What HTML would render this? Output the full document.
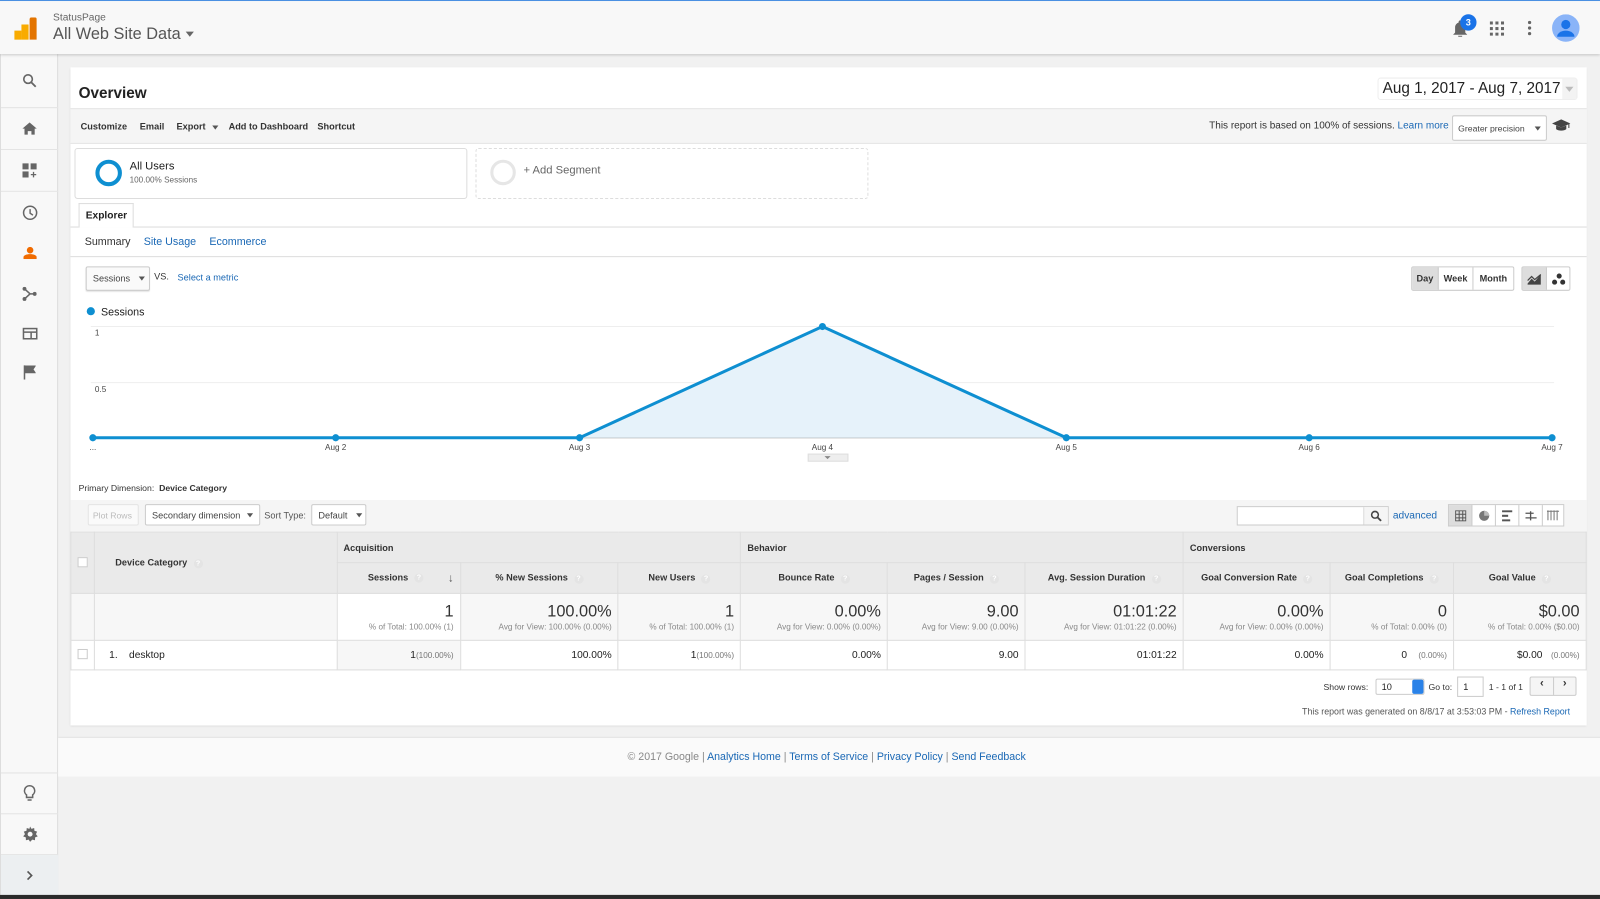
<!DOCTYPE html>
<html><head><meta charset="utf-8"><style>
*{box-sizing:border-box;margin:0;padding:0}
html,body{width:1600px;height:899px;overflow:hidden;background:#f1f1f1;font-family:"Liberation Sans",Arial,sans-serif;color:#222}
#w{position:absolute;left:0;top:0;width:1568px;height:881px;transform:scale(1.0204);transform-origin:0 0;background:#f1f1f1}
.a{position:absolute;white-space:nowrap}
.lnk{color:#1a68b5}
.hdr{left:0;top:0;width:1568px;height:53px;background:#f8f8f8;border-top:1px solid #4a90e2;box-shadow:0 1px 3px rgba(0,0,0,.25);z-index:3}
.side{left:0;top:53px;width:57px;height:824px;background:#f8f8f8;border-right:1px solid #ddd;border-left:1px solid #ddd}
.si{position:absolute;left:0;width:56px;display:flex;justify-content:center;align-items:center}
.card{left:69px;top:66px;width:1486px;height:645px;background:#fff;box-shadow:0 1px 2px rgba(0,0,0,.12)}
.tb{font-size:9px;font-weight:bold;color:#333}
table{border-collapse:collapse;position:absolute;left:69px;top:521px;width:1486px;font-size:9px}
td{border:1px solid #ddd;padding:0 6px;white-space:nowrap}
.gh td{background:#eaeaea;height:30px;font-weight:bold;color:#333}
.ch td{background:#eaeaea;height:30px;font-weight:bold;text-align:center;color:#333}
.tot td{background:#f7f7f7;height:46px;text-align:right;vertical-align:middle}
.tot b{display:block;font-weight:normal;font-size:16px;color:#333}
.tot i{font-style:normal;font-size:8px;color:#888}
.dr td{height:29px;text-align:right;font-size:10px;color:#222}
.q{display:inline-block;width:9px;height:9px;border-radius:50%;background:#e4e4e4;color:#fff;font-size:7px;line-height:9px;text-align:center;margin-left:6px;vertical-align:middle}
.btn{border:1px solid #ccc;border-radius:2px;background:#fafafa;font-size:9px;color:#444;display:flex;align-items:center;padding:0 6px;white-space:nowrap}
.car{display:inline-block;border-left:3px solid transparent;border-right:3px solid transparent;border-top:4px solid #555;margin-left:6px}
</style></head><body><div id="w">

<div class="a hdr">
 <svg class="a" style="left:14px;top:16px" width="22" height="22"><rect x="0" y="13" width="7" height="9" fill="#f9ab00"/><rect x="7" y="7" width="7" height="15" fill="#f9ab00"/><path d="M15 2 Q15 0 17 0 H20 Q22 0 22 2 V22 H15Z" fill="#e37400"/></svg>
 <div class="a" style="left:52px;top:11px;font-size:10px;color:#666">StatusPage</div>
 <div class="a" style="left:52px;top:24px;font-size:16px;color:#555">All Web Site Data <span style="display:inline-block;border-left:4px solid transparent;border-right:4px solid transparent;border-top:5px solid #666;vertical-align:middle"></span></div>
 <svg class="a" style="left:1424px;top:19px" width="14" height="16"><path d="M7 0a1.5 1.5 0 011.5 1.5v.5A5 5 0 0112 7v5l2 2H0l2-2V7a5 5 0 013.5-5v-.5A1.5 1.5 0 017 0zM5 15h4a2 2 0 01-4 0z" fill="#666"/></svg>
 <div class="a" style="left:1431px;top:13px;width:16px;height:16px;border-radius:50%;background:#1a73e8;color:#fff;font-size:9px;font-weight:bold;text-align:center;line-height:16px">3</div>
 <svg class="a" style="left:1460px;top:20px" width="14" height="14" fill="#666"><rect x="0" y="0" width="3" height="3"/><rect x="5.5" y="0" width="3" height="3"/><rect x="11" y="0" width="3" height="3"/><rect x="0" y="5.5" width="3" height="3"/><rect x="5.5" y="5.5" width="3" height="3"/><rect x="11" y="5.5" width="3" height="3"/><rect x="0" y="11" width="3" height="3"/><rect x="5.5" y="11" width="3" height="3"/><rect x="11" y="11" width="3" height="3"/></svg>
 <svg class="a" style="left:1497px;top:19px" width="4" height="15" fill="#666"><circle cx="2" cy="2" r="1.6"/><circle cx="2" cy="7.5" r="1.6"/><circle cx="2" cy="13" r="1.6"/></svg>
 <svg class="a" style="left:1521px;top:13px" width="27" height="27"><circle cx="13.5" cy="13.5" r="13.5" fill="#8ab4f8"/><circle cx="13.5" cy="10" r="4.5" fill="#1a73e8"/><path d="M5 22a8.5 6 0 0117 0z" fill="#1a73e8"/></svg>
</div>

<div class="a side">
 <div class="si" style="top:0;height:53px;border-bottom:1px solid #e4e4e4"><svg width="14" height="14"><circle cx="5.5" cy="5.5" r="4.2" stroke="#666" stroke-width="1.6" fill="none"/><path d="M8.7 8.7L13 13" stroke="#666" stroke-width="1.8"/></svg></div>
 <div class="si" style="top:53px;height:41px;border-bottom:1px solid #e4e4e4"><svg width="14" height="12"><path d="M7 0L14 6h-2v6H8.8V8.5H5.2V12H2V6H0z" fill="#666"/></svg></div>
 <div class="si" style="top:94px;height:41px;border-bottom:1px solid #e4e4e4"><svg width="14" height="14" fill="#666"><rect x="0" y="0" width="6" height="6"/><rect x="8" y="0" width="6" height="6"/><rect x="0" y="8" width="6" height="6"/><path d="M10.2 8.5h1.3v2h2v1.3h-2v2h-1.3v-2h-2v-1.3h2z"/></svg></div>
 <div class="si" style="top:135px;height:40px"><svg width="15" height="15"><circle cx="7.5" cy="7.5" r="6.4" stroke="#666" stroke-width="1.5" fill="none"/><path d="M7.5 4v4l2.8 1.8" stroke="#666" stroke-width="1.4" fill="none"/></svg></div>
 <div class="si" style="top:175px;height:40px"><svg width="13" height="12" fill="#f06b00"><circle cx="6.5" cy="3.2" r="3.2"/><path d="M0 12v-2c0-2 3.5-3 6.5-3s6.5 1 6.5 3v2z"/></svg></div>
 <div class="si" style="top:215px;height:40px"><svg width="14" height="14"><path d="M2 2L7.5 7L2 12M7.5 7h4.5" stroke="#666" stroke-width="1.5" fill="none"/><circle cx="2" cy="2" r="1.9" fill="#666"/><circle cx="2" cy="12" r="1.9" fill="#666"/><circle cx="12" cy="7" r="1.9" fill="#666"/></svg></div>
 <div class="si" style="top:255px;height:38px"><svg width="15" height="12"><rect x="1" y="1" width="13" height="10" stroke="#666" stroke-width="1.5" fill="none"/><path d="M1 4.5h13M8.5 4.5v6.5" stroke="#666" stroke-width="1.5"/></svg></div>
 <div class="si" style="top:293px;height:38px"><svg width="12" height="14"><path d="M1 0v14M1 1h10l-2 3 2 3H1" fill="#666" stroke="#666" stroke-width="1.5"/></svg></div>
 <div class="si" style="top:704px;height:41px;border-top:1px solid #e4e4e4;border-bottom:1px solid #e4e4e4"><svg width="12" height="17"><path d="M6 1a5 5 0 00-3 9v2.5h6V10a5 5 0 00-3-9z" stroke="#666" stroke-width="1.5" fill="none"/><path d="M4 15h4" stroke="#666" stroke-width="1.5"/></svg></div>
 <div class="si" style="top:745px;height:40px;border-bottom:1px solid #e4e4e4"><svg width="15" height="15"><path d="M7.5 0l1.4 2.3 2.6-.9.2 2.8 2.7.8-1.2 2.5 1.8 2.2-2.6.9-.1 2.8-2.7-.6L7.5 15l-1.4-2.2-2.7.6-.1-2.8-2.6-.9 1.8-2.2L1.3 5l2.7-.8.2-2.8 2.6.9z" fill="#666"/><circle cx="7.5" cy="7.5" r="2.4" fill="#f8f8f8"/></svg></div>
 <div class="si" style="top:785px;height:39px;background:#eceff1"><svg width="8" height="10"><path d="M2 1l4 4-4 4" stroke="#555" stroke-width="1.6" fill="none"/></svg></div>
</div>

<div class="a card"></div>
<div class="a" style="left:77px;top:83px;font-size:15px;font-weight:bold">Overview</div>
<div class="a" style="left:1350px;top:76px;width:196px;height:22px;border:1px solid #eee;border-radius:3px;font-size:15px;color:#222;padding:1px 4px;background:#fff">Aug 1, 2017 - Aug 7, 2017<span style="position:absolute;right:0;top:0;width:14px;height:20px;background:#f3f3f3"><span style="position:absolute;left:3px;top:8px;border-left:4px solid transparent;border-right:4px solid transparent;border-top:5px solid #bbb"></span></span></div>

<div class="a" style="left:69px;top:106px;width:1486px;height:35px;background:#f5f5f5;border-top:1px solid #e5e5e5;border-bottom:1px solid #e5e5e5"></div>
<div class="a tb" style="left:79px;top:119px">Customize</div>
<div class="a tb" style="left:137px;top:119px">Email</div>
<div class="a tb" style="left:173px;top:119px">Export<span class="car"></span></div>
<div class="a tb" style="left:224px;top:119px">Add to Dashboard</div>
<div class="a tb" style="left:311px;top:119px">Shortcut</div>
<div class="a" style="left:1185px;top:118px;font-size:9.8px;color:#333">This report is based on 100% of sessions. <span class="lnk">Learn more</span></div>
<div class="a btn" style="left:1423px;top:113px;width:93px;height:25px;background:#fff;font-size:8.5px;padding:0 5px">Greater precision<span class="car" style="margin-left:auto"></span></div>
<svg class="a" style="left:1521px;top:116px" width="18" height="13"><path d="M9 1L18 5 9 9 0 5z" fill="#444"/><path d="M4 7v3.5c2 2 8 2 10 0V7L9 9z" fill="#444"/><path d="M16.5 5.5v4" stroke="#444" stroke-width="1"/></svg>

<div class="a" style="left:73px;top:145px;width:385px;height:50px;border:1px solid #ddd;border-radius:3px"></div>
<svg class="a" style="left:93px;top:156px" width="27" height="27"><circle cx="13.5" cy="13.5" r="11" stroke="#0e8fd1" stroke-width="4" fill="none"/></svg>
<div class="a" style="left:127px;top:157px;font-size:11px;color:#222">All Users</div>
<div class="a" style="left:127px;top:172px;font-size:8px;color:#666">100.00% Sessions</div>
<div class="a" style="left:466px;top:145px;width:385px;height:50px;border:1px dashed #ddd;border-radius:3px"></div>
<svg class="a" style="left:480px;top:156px" width="26" height="26"><circle cx="13" cy="13" r="11" stroke="#e6e6e6" stroke-width="3" fill="none"/></svg>
<div class="a" style="left:513px;top:161px;font-size:11px;color:#666">+ Add Segment</div>

<div class="a" style="left:69px;top:222px;width:1486px;height:1px;background:#ddd"></div>
<div class="a" style="left:77px;top:199px;width:54px;height:24px;border:1px solid #ddd;border-bottom:none;background:#fff;font-size:10px;font-weight:bold;padding:6px 6px">Explorer</div>
<div class="a" style="left:83px;top:231px;font-size:10.5px;color:#333">Summary <span class="lnk" style="margin-left:10px">Site Usage</span> <span class="lnk" style="margin-left:10px">Ecommerce</span></div>
<div class="a" style="left:69px;top:251px;width:1486px;height:1px;background:#ddd"></div>

<div class="a btn" style="left:84px;top:261px;width:63px;height:24px;box-shadow:0 1px 1px rgba(0,0,0,.1)">Sessions<span class="car" style="margin-left:8px"></span></div>
<div class="a" style="left:151px;top:266px;font-size:9px;color:#333">VS.</div>
<div class="a lnk" style="left:174px;top:267px;font-size:9px">Select a metric</div>

<div class="a" style="left:1383px;top:261px;width:101px;height:24px;border:1px solid #ccc;border-radius:2px;display:flex;font-size:9px;font-weight:bold;color:#333">
<div style="width:26px;background:#ddd;display:flex;align-items:center;justify-content:center;border-right:1px solid #ccc">Day</div>
<div style="width:34px;display:flex;align-items:center;justify-content:center;border-right:1px solid #ccc">Week</div>
<div style="flex:1;display:flex;align-items:center;justify-content:center">Month</div></div>
<div class="a" style="left:1491px;top:261px;width:48px;height:24px;border:1px solid #ccc;border-radius:2px;display:flex">
<div style="width:24px;background:#ddd;border-right:1px solid #ccc;display:flex;align-items:center;justify-content:center"><svg width="14" height="11"><path d="M0 10L4 5l3 3 6-7v10H0z" fill="#444"/><path d="M0 7l4-4 3 3 6-5" stroke="#444" stroke-width="1.2" fill="none"/></svg></div>
<div style="flex:1;display:flex;align-items:center;justify-content:center"><svg width="13" height="11" fill="#333"><circle cx="7" cy="2.5" r="2.5"/><circle cx="2.5" cy="8.5" r="2.5"/><circle cx="10.5" cy="8.5" r="2.5"/></svg></div></div>

<svg class="a" style="left:69px;top:295px" width="1486" height="165">
 <circle cx="20" cy="10" r="4" fill="#0e8fd1"/>
 <text x="30" y="14" font-size="10.5" fill="#222" font-family="Liberation Sans">Sessions</text>
 <path d="M20 25H1454M20 80H1454" stroke="#eee"/>
 <path d="M20 134H1454" stroke="#999"/>
 <text x="24" y="34" font-size="8" fill="#444" font-family="Liberation Sans">1</text>
 <text x="24" y="89" font-size="8" fill="#444" font-family="Liberation Sans">0.5</text>
 <path d="M499 134L737 25L976 134Z" fill="#e6f2fa"/>
 <path d="M22 134H499L737 25L976 134H1452" stroke="#0e8fd1" stroke-width="3" fill="none"/>
 <g fill="#0e8fd1"><circle cx="22" cy="134" r="3.5"/><circle cx="260" cy="134" r="3.5"/><circle cx="499" cy="134" r="3.5"/><circle cx="737" cy="25" r="3.5"/><circle cx="976" cy="134" r="3.5"/><circle cx="1214" cy="134" r="3.5"/><circle cx="1452" cy="134" r="3.5"/></g>
 <g font-size="8" fill="#444" font-family="Liberation Sans" text-anchor="middle"><text x="22" y="146">...</text><text x="260" y="146">Aug 2</text><text x="499" y="146">Aug 3</text><text x="737" y="146">Aug 4</text><text x="976" y="146">Aug 5</text><text x="1214" y="146">Aug 6</text><text x="1452" y="146">Aug 7</text></g>
 <rect x="723" y="150" width="39" height="7" fill="#eee" stroke="#ddd"/>
 <path d="M739 152l3 3 3-3z" fill="#888"/>
</svg>

<div class="a" style="left:77px;top:473px;font-size:8.5px;color:#333">Primary Dimension: &nbsp;<b>Device Category</b></div>
<div class="a" style="left:69px;top:490px;width:1486px;height:31px;background:#f5f5f5"></div>
<div class="a btn" style="left:86px;top:494px;width:50px;height:21px;color:#bbb;border-color:#e4e4e4;font-size:8.5px;padding:0 4px">Plot Rows</div>
<div class="a btn" style="left:142px;top:494px;width:113px;height:21px;background:#fff">Secondary dimension<span class="car"></span></div>
<div class="a" style="left:259px;top:500px;font-size:9px;color:#555">Sort Type:</div>
<div class="a btn" style="left:305px;top:494px;width:54px;height:21px;background:#fff">Default<span class="car" style="margin-left:8px"></span></div>
<div class="a" style="left:1212px;top:496px;width:149px;height:19px;border:1px solid #ccc;background:#fff"><div style="position:absolute;right:0;top:0;width:24px;height:17px;border-left:1px solid #ddd;background:#f5f5f5"><svg style="margin:3px 6px" width="11" height="11"><circle cx="4.5" cy="4.5" r="3.3" stroke="#444" stroke-width="1.5" fill="none"/><path d="M7 7l3.5 3.5" stroke="#444" stroke-width="1.8"/></svg></div></div>
<div class="a lnk" style="left:1365px;top:500px;font-size:10px">advanced</div>
<div class="a" style="left:1419px;top:494px;width:114px;height:22px;border:1px solid #ccc;display:flex;background:#fff">
 <div style="width:23px;background:#ddd;border-right:1px solid #ccc;display:flex;align-items:center;justify-content:center"><svg width="11" height="11"><path d="M.5.5h10v10H.5zM.5 4h10M.5 7.5h10M4 .5v10M7.5.5v10" stroke="#555" fill="none"/></svg></div>
 <div style="width:23px;border-right:1px solid #ccc;display:flex;align-items:center;justify-content:center"><svg width="11" height="11"><circle cx="5.5" cy="5.5" r="5" fill="#777"/><path d="M5.5 5.5V.5A5 5 0 0110.5 5.5z" fill="#bbb"/></svg></div>
 <div style="width:23px;border-right:1px solid #ccc;display:flex;align-items:center;justify-content:center"><svg width="11" height="11" fill="#555"><rect y="0" width="10" height="2"/><rect y="4.5" width="6" height="2"/><rect y="9" width="8" height="2"/></svg></div>
 <div style="width:23px;border-right:1px solid #ccc;display:flex;align-items:center;justify-content:center"><svg width="11" height="11"><path d="M0 3h8M0 7.5h11M5 1v9" stroke="#555" stroke-width="1.3"/></svg></div>
 <div style="flex:1;display:flex;align-items:center;justify-content:center"><svg width="12" height="10"><path d="M1 0v10M4 0v10M7 0v10M10 0v10M0 1h12" stroke="#777" stroke-width="1"/></svg></div>
</div>

<table>
<colgroup><col style="width:23px"><col style="width:238px"><col style="width:121px"><col style="width:155px"><col style="width:120px"><col style="width:144px"><col style="width:135px"><col style="width:155px"><col style="width:144px"><col style="width:121px"><col style="width:130px"></colgroup>
<tr class="gh"><td rowspan="2" style="text-align:center"><span style="display:inline-block;width:10px;height:10px;border:1px solid #ccc;background:#fff"></span></td><td rowspan="2" style="padding-left:20px">Device Category<span class="q">?</span></td><td colspan="3">Acquisition</td><td colspan="3">Behavior</td><td colspan="3">Conversions</td></tr>
<tr class="ch"><td>Sessions<span class="q">?</span><span style="float:right;font-size:11px;color:#555">&#8595;</span></td><td>% New Sessions<span class="q">?</span></td><td>New Users<span class="q">?</span></td><td>Bounce Rate<span class="q">?</span></td><td>Pages / Session<span class="q">?</span></td><td>Avg. Session Duration<span class="q">?</span></td><td>Goal Conversion Rate<span class="q">?</span></td><td>Goal Completions<span class="q">?</span></td><td>Goal Value<span class="q">?</span></td></tr>
<tr class="tot"><td></td><td></td><td style="background:#fff"><b>1</b><i>% of Total: 100.00% (1)</i></td><td><b>100.00%</b><i>Avg for View: 100.00% (0.00%)</i></td><td><b>1</b><i>% of Total: 100.00% (1)</i></td><td><b>0.00%</b><i>Avg for View: 0.00% (0.00%)</i></td><td><b>9.00</b><i>Avg for View: 9.00 (0.00%)</i></td><td><b>01:01:22</b><i>Avg for View: 01:01:22 (0.00%)</i></td><td><b>0.00%</b><i>Avg for View: 0.00% (0.00%)</i></td><td><b>0</b><i>% of Total: 0.00% (0)</i></td><td><b>$0.00</b><i>% of Total: 0.00% ($0.00)</i></td></tr>
<tr class="dr"><td style="text-align:center"><span style="display:inline-block;width:10px;height:10px;border:1px solid #ccc"></span></td><td style="text-align:left;padding-left:14px">1. &nbsp;&nbsp;&nbsp;desktop</td><td style="background:#f7f7f7">1<span style="font-size:8px;color:#777">(100.00%)</span></td><td>100.00%</td><td>1<span style="font-size:8px;color:#777">(100.00%)</span></td><td>0.00%</td><td>9.00</td><td>01:01:22</td><td>0.00%</td><td>0 &nbsp;&nbsp;&nbsp;<span style="font-size:8px;color:#777">(0.00%)</span></td><td>$0.00 &nbsp;&nbsp;<span style="font-size:8px;color:#777">(0.00%)</span></td></tr>
</table>

<div class="a" style="left:1297px;top:668px;font-size:8.5px;color:#333">Show rows:</div>
<div class="a" style="left:1348px;top:665px;width:48px;height:16px;border:1px solid #ccc;border-radius:2px;font-size:9px;padding:2px 5px;background:#fff">10<span style="position:absolute;right:0;top:0;width:11px;height:14px;background:#2a82e8;border-radius:2px"></span></div>
<div class="a" style="left:1400px;top:668px;font-size:8.5px;color:#333">Go to:</div>
<div class="a" style="left:1428px;top:663px;width:26px;height:20px;border:1px solid #ccc;font-size:9px;padding:4px 5px">1</div>
<div class="a" style="left:1459px;top:668px;font-size:8.5px;color:#333">1 - 1 of 1</div>
<div class="a" style="left:1499px;top:663px;width:46px;height:19px;border:1px solid #ccc;border-radius:2px;display:flex;background:#f5f5f5;font-size:11px;font-weight:bold;color:#333"><div style="width:23px;text-align:center;border-right:1px solid #ccc">&#8249;</div><div style="flex:1;text-align:center">&#8250;</div></div>
<div class="a" style="left:1276px;top:692px;font-size:8.7px;color:#555">This report was generated on 8/8/17 at 3:53:03 PM - <span class="lnk">Refresh Report</span></div>

<div class="a" style="left:57px;top:722px;width:1511px;height:39px;background:#fafafa;border-top:1px solid #e0e0e0"></div>
<div class="a" style="left:615px;top:737px;font-size:10.4px;color:#888">© 2017 Google | <span class="lnk">Analytics Home</span> | <span class="lnk">Terms of Service</span> | <span class="lnk">Privacy Policy</span> | <span class="lnk">Send Feedback</span></div>

<div class="a" style="left:0;top:877px;width:1568px;height:4px;background:#2a2a2a"></div>
</div></body></html>
